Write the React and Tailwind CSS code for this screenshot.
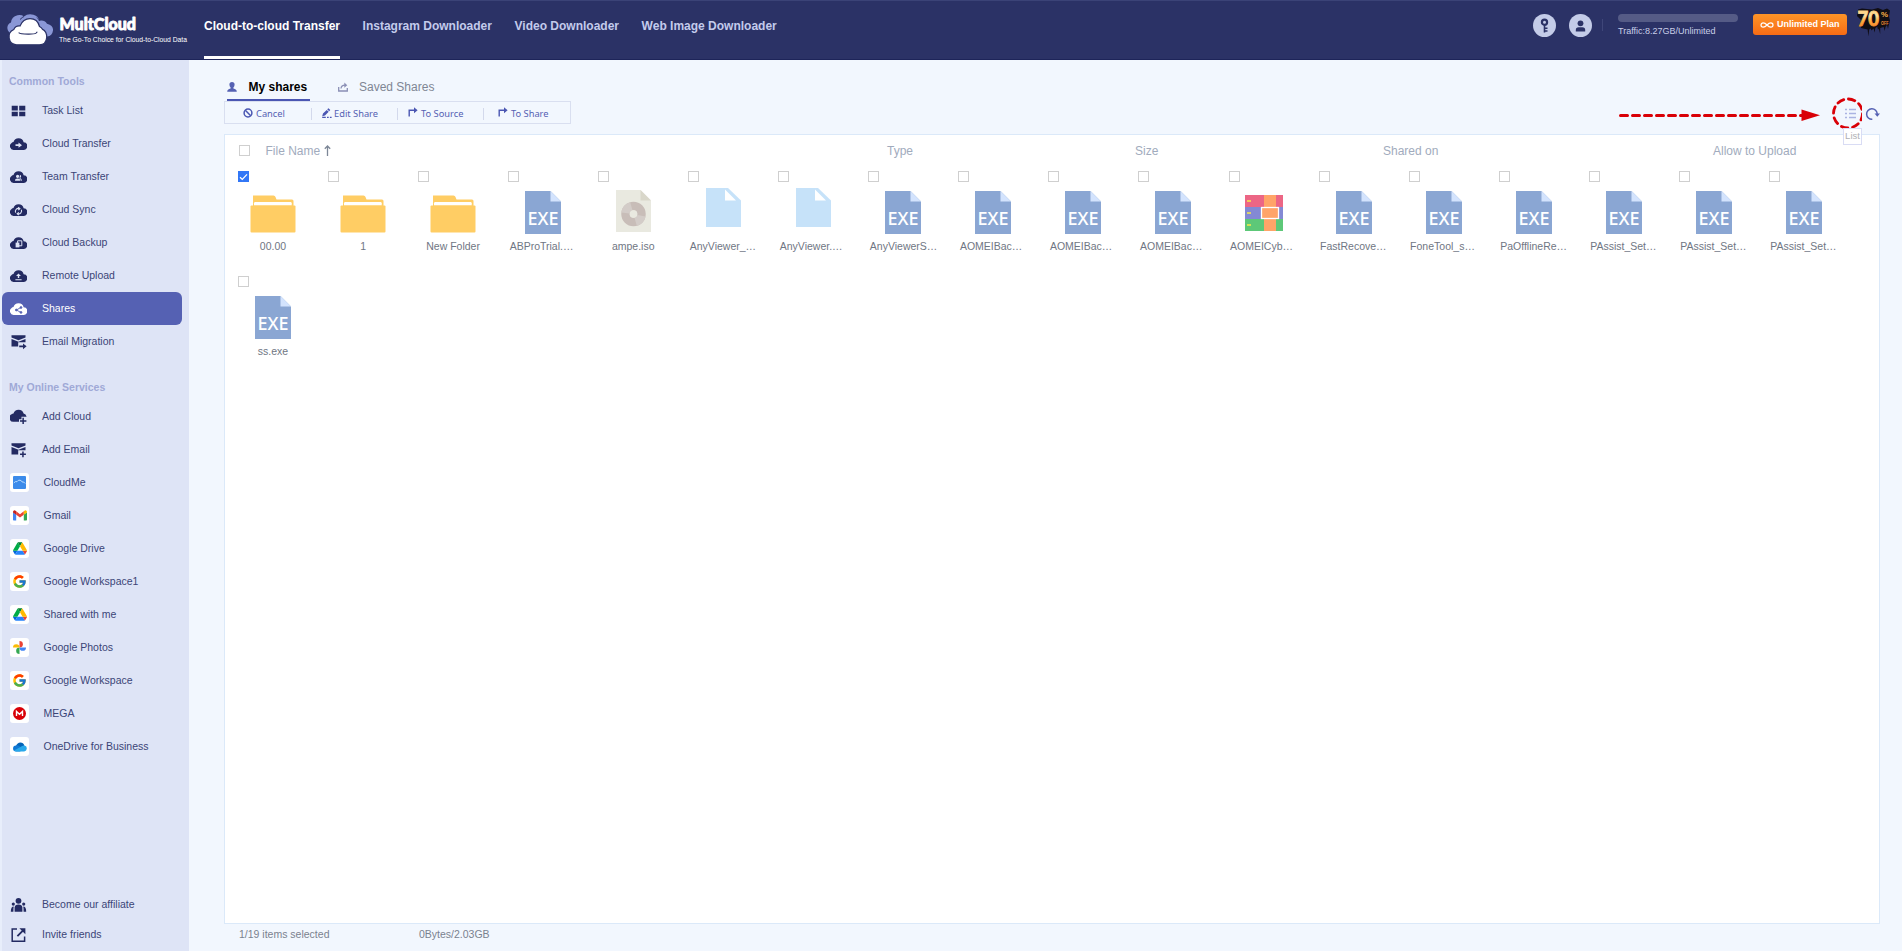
import { FcGoogle } from 'react-icons/fc'

const topLinks = ['Cloud-to-cloud Transfer', 'Instagram Downloader', 'Video Downloader', 'Web Image Downloader']

const tools = [
  { label: 'Task List', icon: 'tasks' },
  { label: 'Cloud Transfer', icon: 'transfer' },
  { label: 'Team Transfer', icon: 'team' },
  { label: 'Cloud Sync', icon: 'sync' },
  { label: 'Cloud Backup', icon: 'backup' },
  { label: 'Remote Upload', icon: 'upload' },
  { label: 'Shares', icon: 'shares', active: true },
  { label: 'Email Migration', icon: 'mailMove' },
]

const addLinks = [
  { label: 'Add Cloud', icon: 'cloudAdd' },
  { label: 'Add Email', icon: 'mailAdd' },
]

const services = [
  { label: 'CloudMe', Logo: CloudMeLogo },
  { label: 'Gmail', Logo: GmailLogo },
  { label: 'Google Drive', Logo: DriveLogo },
  { label: 'Google Workspace1', Logo: GoogleLogo },
  { label: 'Shared with me', Logo: DriveLogo },
  { label: 'Google Photos', Logo: PhotosLogo },
  { label: 'Google Workspace', Logo: GoogleLogo },
  { label: 'MEGA', Logo: MegaLogo },
  { label: 'OneDrive for Business', Logo: OneDriveLogo },
]

const files = [
  { name: '00.00', kind: 'folder', checked: true },
  { name: '1', kind: 'folder' },
  { name: 'New Folder', kind: 'folder' },
  { name: 'ABProTrial.…', kind: 'exe' },
  { name: 'ampe.iso', kind: 'iso' },
  { name: 'AnyViewer_…', kind: 'doc' },
  { name: 'AnyViewer.…', kind: 'doc' },
  { name: 'AnyViewerS…', kind: 'exe' },
  { name: 'AOMEIBac…', kind: 'exe' },
  { name: 'AOMEIBac…', kind: 'exe' },
  { name: 'AOMEIBac…', kind: 'exe' },
  { name: 'AOMEICyb…', kind: 'rar' },
  { name: 'FastRecove…', kind: 'exe' },
  { name: 'FoneTool_s…', kind: 'exe' },
  { name: 'PaOfflineRe…', kind: 'exe' },
  { name: 'PAssist_Set…', kind: 'exe' },
  { name: 'PAssist_Set…', kind: 'exe' },
  { name: 'PAssist_Set…', kind: 'exe' },
  { name: 'ss.exe', kind: 'exe' },
]

const CLOUD = 'M4 12A3.9 3.9 0 0 1 1.6 4.9Q2.3 4.2 3.5 4.1C4 1.7 6 .3 8.6 .3S13.2 1.8 13.6 4.2A3.9 3.9 0 0 1 13.1 12z'

// glyphs are cut out of the cloud in the row's background colour
const cloudGlyphs = {
  transfer: <path d="M5.5 6.3h3V4.6L12 7.2 8.5 9.8V8.1h-3z" fill="var(--cut)" />,
  team: (
    <g fill="var(--cut)">
      <circle cx="7.6" cy="5.3" r="1.6" />
      <path d="M5 9.8q0-2.4 2.6-2.4t2.6 2.4z" />
      <path d="M9.8 3.8a1.6 1.6 0 0 1 .2 3.1q1.9.3 1.9 2.9h-1.2q0-1.8-1.3-2.6.9-1.6.4-3.4z" />
    </g>
  ),
  sync: (
    <g fill="none" stroke="var(--cut)" strokeWidth="1.1">
      <path d="M5.6 8.6A3 3 0 0 1 9 4.5M11.4 5.8A3 3 0 0 1 8 9.8" />
      <path d="M8.2 3.2 9.9 4.7 8.3 6M8.8 8.4 7.2 9.7 8.8 11" />
    </g>
  ),
  backup: (
    <g>
      <path d="M7.6 3.8h4.2v5H7.6z" fill="none" stroke="var(--cut)" strokeWidth="1" />
      <path d="M5.6 5.6h3.8v4.8H5.6z" fill="var(--cut)" />
    </g>
  ),
  upload: <path d="M8.5 3.4 11 6H9.2v2H7.8V6H6zM5.4 9.2h6.2v1H5.4z" fill="var(--cut)" />,
  shares: (
    <g fill="var(--cut)" stroke="var(--cut)" strokeWidth=".9">
      <path d="M11 4.4 6.4 7 11 9.5" fill="none" />
      <circle cx="11" cy="4.5" r=".9" />
      <circle cx="6.3" cy="7" r=".9" />
      <circle cx="11" cy="9.4" r=".9" />
    </g>
  ),
}

function MenuIcon({ name }) {
  if (name === 'tasks') {
    return (
      <svg width="17" height="12" viewBox="0 0 17 12" fill="currentColor">
        <path d="M1.7 .8h6.1v4.6H1.7zM9.2 .8h6.1v4.6H9.2zM1.7 6.7h6.1v4.6H1.7zM9.2 6.7h6.1v4.6H9.2z" />
      </svg>
    )
  }
  if (name === 'mailMove' || name === 'mailAdd') {
    return (
      <svg width="17" height="16" viewBox="0 0 17 16" fill="currentColor">
        <path d="M1.5 1.2h14v2.2L8.5 6.2 1.5 3.4zM1.5 5l7 2.8 7-2.8v3.2H8.2v4.2H1.5z" />
        {name === 'mailMove' ? (
          <path d="M9.2 11.4h3.8V9.4l3.6 2.9-3.6 2.9v-2H9.2z" />
        ) : (
          <path d="M12.2 9.4h1.5v2.2h2.2v1.5h-2.2v2.2h-1.5v-2.2H10v-1.5h2.2z" />
        )}
      </svg>
    )
  }
  if (name === 'cloudAdd') {
    return (
      <svg width="17" height="16" viewBox="0 0 17 16" fill="currentColor">
        <path d="M4 12.8A4 4 0 0 1 1.6 5.3Q2.3 4.6 3.5 4.5C4 2.1 6 .7 8.6 .7S13.2 2.2 13.6 4.6Q16 5.2 16.6 7.8H11.5v2.4H9v2.6z" />
        <path d="M12.4 8.8h1.5v2.4h2.5v1.5h-2.5v2.4h-1.5v-2.4H10v-1.5h2.4z" />
      </svg>
    )
  }
  if (name === 'affiliate') {
    return (
      <svg width="17" height="16" viewBox="0 0 17 16" fill="currentColor">
        <circle cx="8.5" cy="3.8" r="2.9" />
        <path d="M4.6 14.8V10.4Q4.8 7.4 8.5 7.4t3.9 3v4.4z" />
        <circle cx="3.3" cy="7.1" r="1.6" />
        <circle cx="13.7" cy="7.1" r="1.6" />
        <path d="M.8 14.8q0-5.4 3-5.4-.4 1-.4 5.4zM16.2 14.8q0-5.4-3-5.4.4 1 .4 5.4z" />
      </svg>
    )
  }
  if (name === 'invite') {
    return (
      <svg width="17" height="16" viewBox="0 0 17 16" fill="none" stroke="currentColor" strokeWidth="1.5">
        <path d="M7 1.9H2.2v12.4h12.4V9.6" />
        <path d="m7.4 9.1 6-6" strokeWidth="1.8" />
        <path d="M9.4 1.2h6v6z" fill="currentColor" stroke="none" />
      </svg>
    )
  }
  return (
    <svg width="17" height="12" viewBox="0 0 17 12" fill="currentColor">
      <path d={CLOUD} />
      {cloudGlyphs[name]}
    </svg>
  )
}

function CloudMeLogo() {
  return (
    <svg width="13" height="13" viewBox="0 0 13 13">
      <rect width="13" height="13" rx="1" fill="#3c8bea" />
      <path d="M.8 6.9Q2.4 5 4 5.7 5 3.8 7 4.2q1.6.3 2 1.7 2-.4 3.2 1.6" fill="none" stroke="#b9dcff" strokeWidth="1" />
    </svg>
  )
}

function GmailLogo() {
  return (
    <svg width="14" height="11" viewBox="0 0 14 11">
      <path d="M0 2.2V9.8Q0 10.6 .8 10.6H3.2V4.5z" fill="#4285f4" />
      <path d="M14 2.2V9.8q0 .8-.8.8H10.8V4.5z" fill="#34a853" />
      <path d="M3.2 1.3 7 4.2l3.8-2.9v3.4L7 7.6 3.2 4.7z" fill="#ea4335" />
      <path d="M0 1.8Q.2.2 1.8.3L3.2 1.3v3.4L0 2.4z" fill="#c5221f" />
      <path d="M14 1.8Q13.8.2 12.2.3L10.8 1.3v3.4L14 2.4z" fill="#fbbc04" />
    </svg>
  )
}

function DriveLogo() {
  return (
    <svg width="14" height="13" viewBox="0 0 87.3 78">
      <path d="m6.6 66.85 3.85 6.65c.8 1.4 1.95 2.5 3.3 3.3L27.5 53H0c0 1.55.4 3.1 1.2 4.5z" fill="#0066da" />
      <path d="M43.65 25 29.9 1.2c-1.35.8-2.5 1.9-3.3 3.3L1.2 48.5A9.06 9.06 0 0 0 0 53h27.5z" fill="#00ac47" />
      <path d="M73.55 76.8c1.35-.8 2.5-1.9 3.3-3.3l1.6-2.75L86.1 57.5c.8-1.4 1.2-2.95 1.2-4.5H59.8l5.85 11.5z" fill="#ea4335" />
      <path d="M43.65 25 57.4 1.2C56.05.4 54.5 0 52.9 0H34.4c-1.6 0-3.15.45-4.5 1.2z" fill="#00832d" />
      <path d="M59.8 53H27.5L13.75 76.8c1.35.8 2.9 1.2 4.5 1.2h50.8c1.6 0 3.15-.45 4.5-1.2z" fill="#2684fc" />
      <path d="m73.4 26.5-12.7-22c-.8-1.4-1.95-2.5-3.3-3.3L43.65 25 59.8 53h27.45c0-1.55-.4-3.1-1.2-4.5z" fill="#ffba00" />
    </svg>
  )
}

function GoogleLogo() {
  return <FcGoogle className="size-[15px]" />
}

function PhotosLogo() {
  return (
    <svg width="13" height="13" viewBox="0 0 14 14">
      <path d="M7 0a3.6 3.5 0 0 1 0 7z" fill="#ea4335" />
      <path d="M14 7a3.5 3.6 0 0 1-7 0z" fill="#4285f4" />
      <path d="M7 14a3.6 3.5 0 0 1 0-7z" fill="#34a853" />
      <path d="M0 7a3.5 3.6 0 0 1 7 0z" fill="#fbbc04" />
    </svg>
  )
}

function MegaLogo() {
  return (
    <svg width="13" height="13" viewBox="0 0 13 13">
      <circle cx="6.5" cy="6.5" r="6.5" fill="#d90007" />
      <path d="M3.5 9V4.4l3 2.8 3-2.8V9" fill="none" stroke="#fff" strokeWidth="1.4" />
    </svg>
  )
}

function OneDriveLogo() {
  return (
    <svg width="14" height="10" viewBox="0 0 14 10">
      <path d="M3 4Q4.3 .4 7.4 .4q3 0 4 3.2L7 7z" fill="#0364b8" />
      <path d="M3 9.4A2.9 2.9 0 0 1 3 3.5Q4.5 3 6 4l5 3-4 2.4z" fill="#0f78d4" />
      <path d="M7.5 5Q9.5 3 11.5 3.5A3 3 0 0 1 11.2 9.4H3Q1.8 9.4 1 8.6z" fill="#28a8ea" />
    </svg>
  )
}

function BrandMark() {
  return (
    <svg width="48" height="32" viewBox="0 0 48 32">
      <path
        d="M6 20A6.5 6.5 0 0 1 2 11Q3.5 8.8 5 8.5 5.5 2.5 11.5 1.2q4-.7 6.5 1.3Q22-.8 27.5.8q5 1.4 6 6 5-1 7.5 3 6.5 1.5 6 6.7-.7 5.5-6 6z"
        fill="#8a97d6"
      />
      <path d="M14 5.5q2.5-2.5 4-3M31 3.5q2 1.5 2.5 3.5" fill="none" stroke="#2b3266" strokeWidth="1" />
      <path
        d="M10.5 30.8A8 8 0 0 1 7.8 15.5Q9.5 11.5 14 12 17 4.8 24 4.7q7.5 0 9.5 7.8 2 1 2.8 2.6Q41 17.5 40.7 23.5 40 30.8 33.5 30.8z"
        fill="#fff"
        stroke="#2b3266"
        strokeWidth="1.2"
      />
      <path d="M13 18.8q1 1.2 9 1.3 6.5.1 8-1l1-1" fill="none" stroke="#2b3266" strokeWidth="1.1" strokeLinecap="round" />
    </svg>
  )
}

function SaleBadge() {
  return (
    <svg width="36" height="34" viewBox="0 0 36 34" aria-label="70% off">
      <path
        d="M2 3.500l4-1 10 1 6-1.500 5 2 4-1.500 3 2-1 6 1 4-1 3.500-1 5-1-4-1.500 2-.8 4-1-4-3.500 1v6l-1.300-5-1 .5-.7-3-2 2-.5 4-1.200-4-2 2-.8-2-1.500 1-.8 7-.8-7L5 22V14L1 10z"
        fill="#100d14"
      />
      <defs>
        <linearGradient id="flame" x1="0" y1="0" x2="0" y2="1">
          <stop offset="0" stopColor="#ffc25c" />
          <stop offset=".45" stopColor="#ffe0a0" />
          <stop offset=".65" stopColor="#ffad42" />
          <stop offset="1" stopColor="#ee7420" />
        </linearGradient>
      </defs>
      <text
        x="1.5"
        y="19.5"
        textLength="21.5"
        lengthAdjust="spacingAndGlyphs"
        className="font-['Lato'] text-[21px] font-black"
        fill="url(#flame)"
        stroke="url(#flame)"
        strokeWidth=".8"
      >
        70
      </text>
      <text x="25" y="11" textLength="7" lengthAdjust="spacingAndGlyphs" className="font-['Liberation_Sans'] text-[7px] font-bold" fill="#ffb347">
        %
      </text>
      <text x="25" y="18.5" textLength="7.5" lengthAdjust="spacingAndGlyphs" className="font-['Liberation_Sans'] text-[4.5px] font-bold" fill="#f08a33">
        OFF
      </text>
    </svg>
  )
}

function Header() {
  return (
    <header className="flex h-[60px] shrink-0 border-t border-b border-t-[#3b4377] border-b-[#1d2459] bg-[#2b3266]">
      <div className="flex w-[204px] shrink-0 pt-[13px] pl-1.5">
        <BrandMark />
        <div className="ml-[5px] whitespace-nowrap text-white">
          <svg width="80" height="20" className="block">
            <text
              x="0.5"
              y="16"
              textLength="76.5"
              lengthAdjust="spacingAndGlyphs"
              className="font-['Lato'] text-[16.5px] font-black"
              fill="#fff"
              stroke="#fff"
              strokeWidth=".9"
              strokeLinejoin="round"
            >
              MultCloud
            </text>
          </svg>
          <p className="text-[6.75px] leading-[11px]">The Go-To Choice for Cloud-to-Cloud Data</p>
        </div>
      </div>

      <nav className="flex gap-[22.6px] text-[12px] font-bold text-[#c3cbec]">
        {topLinks.map((label, i) => (
          <a
            key={label}
            href="#"
            className={
              i === 0
                ? 'border-b-[3px] border-white pt-4 leading-[18px] text-white'
                : 'border-b-[3px] border-transparent pt-4 leading-[18px]'
            }
          >
            {label}
          </a>
        ))}
      </nav>

      <div className="ml-auto flex items-start pr-2.5">
        <div className="mt-[13px] flex size-[23px] items-center justify-center rounded-full bg-[#c4cce8]">
          <svg width="9" height="15" viewBox="0 0 9 15" fill="none" stroke="#2b3266">
            <circle cx="4.5" cy="4.2" r="2.6" strokeWidth="2.2" />
            <path d="M4.500 6.500v8M4.500 10.200h3M4.500 13h3" strokeWidth="1.6" />
          </svg>
        </div>
        <div className="mt-[13px] ml-[13px] flex size-[23px] items-center justify-center rounded-full bg-[#c4cce8]">
          <svg width="11" height="12" viewBox="0 0 11 12" fill="#2b3266">
            <circle cx="5.5" cy="3.3" r="2.9" />
            <path d="M.8 11.500V10q0-2.800 2.800-2.800h3.800q2.800 0 2.800 2.800v1.500z" />
          </svg>
        </div>
        <div className="mt-[18px] ml-[10px] h-3 w-px bg-[#3f4679]" />
        <div className="mt-[13px] ml-[15px] w-[120px]">
          <div className="h-2 rounded-full bg-[#555b86]" />
          <p className="mt-[3px] text-[9px] leading-3 whitespace-nowrap text-[#c9cfe8]">Traffic:8.27GB/Unlimited</p>
        </div>
        <button
          type="button"
          className="mt-[13px] ml-[15px] flex h-[21px] w-[94px] items-center rounded-[3px] bg-linear-to-b from-[#fd9427] to-[#f76b14] pl-[7px] text-[9px] font-bold whitespace-nowrap text-white"
        >
          <svg width="14" height="6" viewBox="0 0 14 6" fill="none" stroke="#fff" strokeWidth="1.2" className="mr-[3px]">
            <path d="M7 3Q5 .8 3.200 .8a2.200 2.200 0 0 0 0 4.400Q5 5.200 7 3T10.800 .8a2.200 2.200 0 0 1 0 4.400Q9 5.200 7 3z" />
          </svg>
          Unlimited Plan
        </button>
        <div className="mt-[5px] ml-[9px]">
          <SaleBadge />
        </div>
      </div>
    </header>
  )
}

function MenuItem({ label, icon, active }) {
  return (
    <a
      href="#"
      className={
        active
          ? 'flex h-[33px] w-[180px] items-center rounded-[6px] bg-[#5561b3] pl-[7.5px] text-white [--cut:#5561b3]'
          : 'flex h-[33px] w-[180px] items-center pl-[7.5px] text-[#232a62] [--cut:#dee4f6]'
      }
    >
      <span className="flex w-[18px] justify-center">
        <MenuIcon name={icon} />
      </span>
      <span className={active ? 'ml-[14.5px]' : 'ml-[14.5px] text-[#3b4577]'}>{label}</span>
    </a>
  )
}

function Sidebar() {
  return (
    <aside className="flex w-[189px] shrink-0 flex-col border-l-2 border-[#e8eefb] bg-[#dee4f6] text-[10.5px] whitespace-nowrap">
      <h2 className="h-[34px] pt-[13px] pl-[7px] leading-4 font-bold text-[#a0a9d6]">Common Tools</h2>
      {tools.map((item) => (
        <MenuItem key={item.label} {...item} />
      ))}
      <h2 className="h-[42px] pt-[21px] pl-[7px] leading-4 font-bold text-[#a0a9d6]">My Online Services</h2>
      {addLinks.map((item) => (
        <MenuItem key={item.label} {...item} />
      ))}
      {services.map(({ label, Logo }) => (
        <a key={label} href="#" className="flex h-[33px] items-center pl-2 text-[#3b4577]">
          <span className="flex size-[19px] items-center justify-center rounded-[3px] bg-white">
            <Logo />
          </span>
          <span className="ml-[14.5px]">{label}</span>
        </a>
      ))}
      <div className="mt-auto flex flex-col">
        <MenuItem label="Become our affiliate" icon="affiliate" />
        <div className="-mt-[3px]">
          <MenuItem label="Invite friends" icon="invite" />
        </div>
      </div>
    </aside>
  )
}

function Checkbox({ checked }) {
  if (checked) {
    return (
      <span className="flex size-[11px] items-center justify-center bg-[#3277f6]">
        <svg width="9" height="8" viewBox="0 0 9 8" fill="none" stroke="#fff" strokeWidth="1.3">
          <path d="m1 4.200 2.300 2.200L8 1.400" />
        </svg>
      </span>
    )
  }
  return <span className="block size-[11px] border border-[#cfcfcf] bg-white" />
}

function FileIcon({ kind }) {
  if (kind === 'folder') {
    return (
      <svg width="46" height="38" viewBox="0 0 46 38" className="mt-[13px]">
        <path d="M3 0.500h20.500q1.500 0 2 1.500l1 2.500H42q1.500 0 1.500 1.500v6H3z" fill="#ffcd64" />
        <path d="M4 10.500V8.200q0-1.200 1.200-1.200H40.500q1.200 0 1.200 1.200V10.500z" fill="#fff" />
        <rect x=".5" y="10.5" width="45" height="27" rx="1" fill="#ffcd64" />
      </svg>
    )
  }
  if (kind === 'iso') {
    return (
      <svg width="35" height="42" viewBox="0 0 35 42" className="mt-2">
        <path d="M0 0h24.500L35 10.500V42H0z" fill="#e9e9e0" />
        <path d="M24.500 0 35 10.500H24.500z" fill="#d9d7ca" />
        <circle cx="17.5" cy="24" r="8" fill="none" stroke="#c8bdb8" strokeWidth="8.5" />
        <path d="M16.400 20.100 14.200 12.200A12.200 12.200 0 0 0 5.300 22.500L13.500 23.500zM18.600 27.900l2.200 7.900a12.200 12.200 0 0 0 8.900-9.300L21.500 25z" fill="#d3ccc8" />
        <circle cx="17.5" cy="24" r="3.8" fill="#e9e9e0" />
      </svg>
    )
  }
  if (kind === 'doc') {
    return (
      <svg width="35" height="39" viewBox="0 0 35 39" className="mt-1.5">
        <path d="M0 0h22L35 12.500V39H0z" fill="#c6e2f9" />
        <path d="M19 1.500v11h11z" fill="#fff" />
      </svg>
    )
  }
  if (kind === 'rar') {
    return (
      <svg width="38" height="36" viewBox="0 0 38 36" className="mt-[13px]">
        <path d="M0 0h38v12H0z" fill="#ec6685" />
        <path d="M0 12h38v12H0z" fill="#8389d4" />
        <path d="M0 24h38v12H0z" fill="#5dc878" />
        <path d="M19 0h12v36H19z" fill="#ffa468" />
        <path d="M2 5.200h4v1.600H2zM2 17.200h4v1.600H2zM2 29.200h4v1.600H2z" fill="#f7ea4a" />
        <rect x="16.5" y="12.5" width="17" height="11" fill="#ffa468" stroke="#fff" strokeWidth="1.3" />
      </svg>
    )
  }
  return (
    <svg width="36" height="43" viewBox="0 0 36 43" className="mt-[9px]">
      <path d="M0 0h25.500L36 10.500V43H0z" fill="#8aa6d3" />
      <path d="M25.500 0 36 10.500H25.500z" fill="#d3e3fd" />
      <text
        x="2.5"
        y="33.5"
        textLength="31"
        lengthAdjust="spacingAndGlyphs"
        className="font-['Noto_Sans'] text-[18px] font-medium"
        fill="#fff"
      >
        EXE
      </text>
    </svg>
  )
}

function FileTile({ name, kind, checked }) {
  const clipped = name.endsWith('…')
  return (
    <div className="flex h-[105px] flex-col text-[10.5px]">
      <Checkbox checked={checked} />
      <div className="flex h-[58px] justify-center">
        <FileIcon kind={kind} />
      </div>
      <p className={clipped ? 'pl-[1.5px] leading-3 whitespace-nowrap' : 'text-center leading-3 whitespace-nowrap'}>{name}</p>
    </div>
  )
}

function Tabs() {
  return (
    <div className="flex pl-[3px] text-[12px] leading-4">
      <div className="flex h-[24px] w-[83px] border-b-2 border-[#4a56b2] pt-0.5">
        <svg width="10" height="10" viewBox="0 0 10 10" fill="#5561b3" className="mt-[3px]">
          <path d="M5 0q2.600 0 2.600 2.600 0 1.800-1.200 2.900v.9q3.400.6 3.400 3.300H.2q0-2.700 3.400-3.300v-.9Q2.400 4.400 2.400 2.600 2.400 0 5 0z" />
        </svg>
        <span className="ml-[11.5px] font-bold text-black">My shares</span>
      </div>
      <div className="ml-7 flex pt-0.5">
        <svg width="10" height="10" viewBox="0 0 10 10" fill="none" stroke="#8a8fb5" strokeWidth="1.3" className="mt-[3px]">
          <path d="M.7 5v4h8.600V6M3 6.500q.3-3.300 4-3.300" />
          <path d="m6.300.6 3 2.600-3 2.600z" fill="#8a8fb5" stroke="none" />
        </svg>
        <span className="ml-[11px] text-[#7f8694]">Saved Shares</span>
      </div>
    </div>
  )
}

function TurnArrow() {
  return (
    <svg width="10" height="10" viewBox="0 0 10 10" fill="none" stroke="#4a56b2" strokeWidth="1.4" className="mr-[3px] -mt-1">
      <path d="M1.200 9.500V3.200h5" />
      <path d="M6 0.200 9.600 3.200 6 6.200z" fill="#4a56b2" stroke="none" />
    </svg>
  )
}

function Toolbar() {
  return (
    <div className="flex h-[23px] w-[347px] items-center border border-[#d9dff0] pt-[3px] font-['Noto_Sans','Open_Sans',sans-serif] text-[9.3px] whitespace-nowrap text-[#5561b3]">
      <div className="flex w-[86px] items-center pl-[18px]">
        <svg width="10" height="10" viewBox="0 0 10 10" fill="none" stroke="#4a56b2" strokeWidth="1.5" className="mr-[3px] -mt-[3px]">
          <circle cx="5" cy="5" r="3.9" />
          <path d="m2.300 2.300 5.400 5.400" />
        </svg>
        Cancel
      </div>
      <div className="flex w-[86px] items-center">
        <span className="mr-2.5 h-3 w-px bg-[#d3d9ec]" />
        <svg width="10" height="10" viewBox="0 0 10 10" fill="#4a56b2" className="mr-[2px] -mt-[3px]">
          <path d="M5.200 1.300 6.500.2 8.300 2 7.200 3.200zM4.700 1.900 6.700 3.800 3 7.600.2 8.300 1 5.600zM.2 8.800h3.600V10H.2zM5 8.800h1.700V10H5zM7.900 8.800h1.700V10H7.900z" />
        </svg>
        Edit Share
      </div>
      <div className="flex w-[86px] items-center">
        <span className="mr-2.5 h-3 w-px bg-[#d3d9ec]" />
        <TurnArrow />
        To Source
      </div>
      <div className="flex items-center">
        <span className="mr-3.5 h-3 w-px bg-[#d3d9ec]" />
        <TurnArrow />
        To Share
      </div>
    </div>
  )
}

function ViewControls() {
  return (
    <div className="relative mt-[34px] ml-auto flex h-[40px] items-center">
      <svg width="243" height="34" viewBox="0 0 243 34" fill="none">
        <path d="M1.500 18.500H184" stroke="#d90007" strokeWidth="3" strokeDasharray="7 5" strokeLinecap="round" />
        <path d="M182.500 12.500 201 18.200 182.500 24z" fill="#d90007" />
        <circle cx="229" cy="16.5" r="14.5" stroke="#d90007" strokeWidth="2.8" strokeDasharray="6.6 4.788" strokeLinecap="round" />
        <path d="M226 12.500h2M226 16.500h2M226 20.500h2M230 12.500h7M230 16.500h7M230 20.500h7" stroke="#aab3e2" strokeWidth="1.4" />
      </svg>
      <svg width="15" height="14" viewBox="0 0 15 14" fill="none" stroke="#5561b3" strokeWidth="1.5" className="ml-[3px] mr-px">
        <path d="M7.300 12.300A5.300 5.300 0 1 1 12.200 7" />
        <path d="M9.500 6.500h5.500L12.300 9.700z" fill="#5561b3" stroke="none" />
      </svg>
      <div className="absolute top-[34px] left-[224px] flex h-[17px] w-[19px] items-center justify-center border border-[#d9dcf4] bg-white text-[9.5px] text-[#b0b0b4]">
        List
      </div>
    </div>
  )
}

function FilePanel() {
  return (
    <section className="flex h-[790px] w-[1656px] flex-col border border-[#dbe9f9] bg-white pl-[13px] text-[#6f7683]">
      <div className="flex h-9 items-center pb-[5px] text-[12px] leading-[30px] text-[#a1abbd]">
        <div className="flex w-[649px] items-center pl-px">
          <Checkbox />
          <span className="ml-[15.5px]">File Name</span>
          <svg width="7" height="11" viewBox="0 0 7 11" fill="none" stroke="#7d8797" strokeWidth="1.3" className="ml-[4px]">
            <path d="M3.500 11V1M.8 3.800 3.500 1l2.700 2.800" />
          </svg>
        </div>
        <span className="w-[248px]">Type</span>
        <span className="w-[248px]">Size</span>
        <span className="w-[330px]">Shared on</span>
        <span>Allow to Upload</span>
      </div>
      <div className="grid grid-cols-[repeat(18,70px)] gap-x-[20.05px]">
        {files.map((file, i) => (
          <FileTile key={i} {...file} />
        ))}
      </div>
    </section>
  )
}

export default function App() {
  return (
    <div className="flex h-[951px] w-[1902px] flex-col overflow-hidden bg-[#f2f7fe] font-['Liberation_Sans',Arial,sans-serif]">
      <Header />
      <div className="flex min-h-0 flex-1">
        <Sidebar />
        <main className="flex flex-1 flex-col pl-[35px]">
          <div className="flex h-[74px] w-[1657px]">
            <div className="pt-[17px]">
              <Tabs />
              <Toolbar />
            </div>
            <ViewControls />
          </div>
          <FilePanel />
          <div className="flex pt-[3px] pl-[15px] text-[10.5px] leading-[14px] text-[#7a828f]">
            <span className="w-[180px]">1/19 items selected</span>
            <span>0Bytes/2.03GB</span>
          </div>
        </main>
      </div>
    </div>
  )
}
